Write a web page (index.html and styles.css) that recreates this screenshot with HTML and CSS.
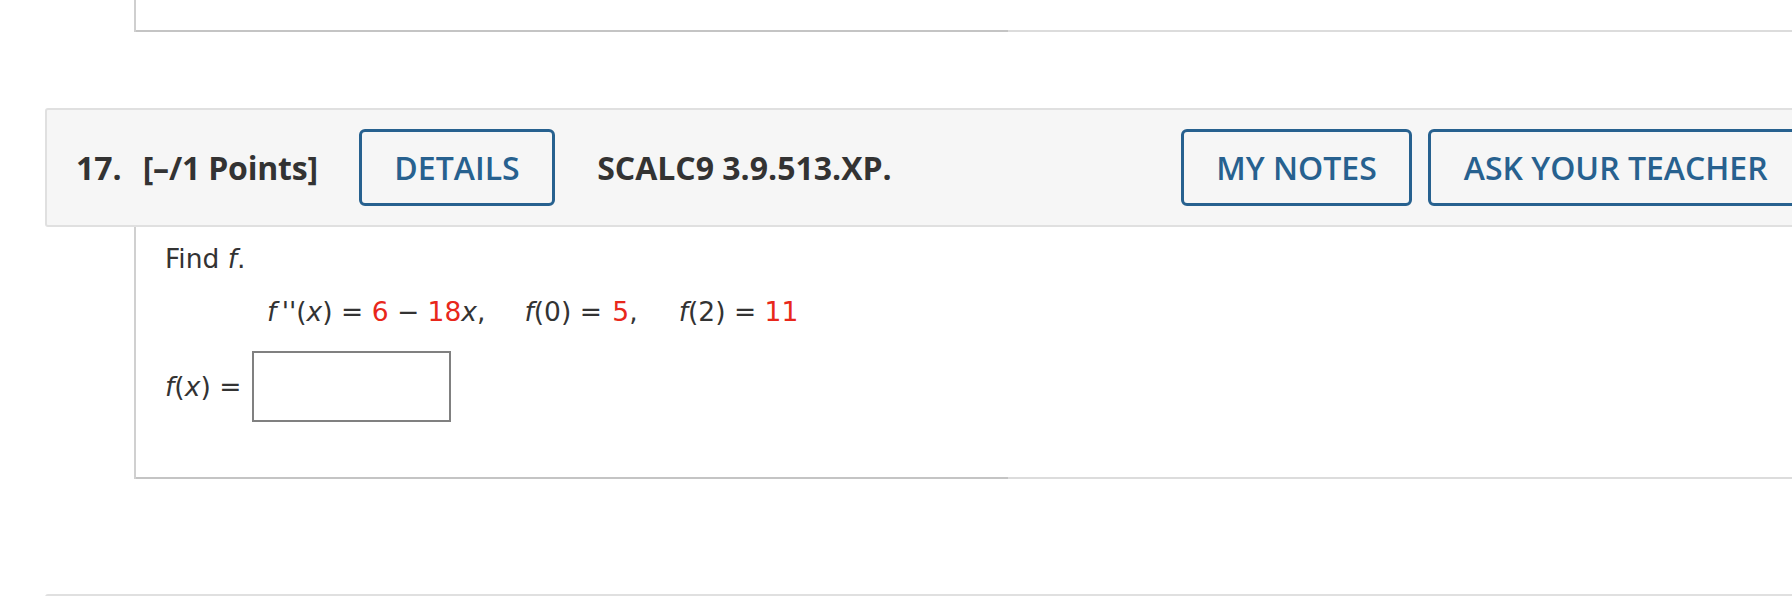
FILE: index.html
```html
<!DOCTYPE html>
<html>
<head>
<meta charset="utf-8">
<link rel="stylesheet" href="styles.css">
</head>
<body>
<div class="page">
  <div class="prev-box"></div>

  <div class="q-header">
    <span class="q-num">17.</span>
    <span class="q-points">[–/1 Points]</span>
    <button class="q-btn btn-details">DETAILS</button>
    <span class="q-code">SCALC9 3.9.513.XP.</span>
    <button class="q-btn btn-notes">MY NOTES</button>
    <button class="q-btn btn-ask">ASK YOUR TEACHER</button>
  </div>

  <div class="q-body">
    <p class="find">Find <i>f</i>.</p>
    <p class="math"><i>f</i>&thinsp;''(<i>x</i>) = <span class="red">6</span> − <span class="red">18</span><i>x</i>,<span class="sep"></span><i>f</i>(0) = <span class="red wide">5</span>,<span class="sep sep2"></span><i>f</i>(2) = <span class="red">11</span></p>
    <div class="answer-row">
      <span class="answer-label"><i>f</i>(<i>x</i>) =</span>
      <span class="answer-box"></span>
    </div>
  </div>

  <div class="q-header next"></div>
</div>
</body>
</html>
```

FILE: styles.css
```css
html, body {
  margin: 0;
  padding: 0;
  background: #ffffff;
  overflow: hidden;
}

.page {
  width: 1792px;
  height: 596px;
  overflow: hidden;
}

.prev-box {
  margin-left: 134px;
  margin-right: -80px;
  height: 32px;
  border-left: 2px solid #cfcfcf;
  box-sizing: border-box;
  background: linear-gradient(to right, #c4c4c4 872px, #dcdcdc 872px) left bottom / 100% 2px no-repeat;
}

.q-header {
  margin-top: 76px;
  margin-left: 45px;
  margin-right: -120px;
  background: #f6f6f6;
  border: 2px solid #e0e0e0;
  border-radius: 3px;
  padding: 19px 0 19px 29px;
  display: flex;
  align-items: center;
  font-family: "Open Sans", "Liberation Sans", sans-serif;
  color: #333333;
}

.q-num {
  font-weight: 700;
  font-size: 32px;
}

.q-points {
  font-weight: 700;
  font-size: 32px;
  margin-left: 21px;
  letter-spacing: -0.2px;
}

.q-code {
  font-weight: 700;
  font-size: 32px;
  margin-left: 42px;
}

.q-btn {
  font-family: "Open Sans", "Liberation Sans", sans-serif;
  font-weight: 600;
  font-size: 32px;
  color: #27618f;
  background: transparent;
  border: 3px solid #27618f;
  border-radius: 6px;
  height: 77px;
  padding: 0 32.5px;
  line-height: 71px;
  margin: 0;
  white-space: nowrap;
  flex-shrink: 0;
}

.btn-details {
  margin-left: 41px;
}

.btn-notes {
  margin-left: 289px;
}

.btn-ask {
  margin-left: 16px;
}

.q-body {
  margin-left: 134px;
  margin-right: -80px;
  height: 252px;
  box-sizing: border-box;
  border-left: 2px solid #d0d0d0;
  background: linear-gradient(to right, #c4c4c4 872px, #dcdcdc 872px) left bottom / 100% 2px no-repeat;
  padding: 12px 0 0 29px;
  font-family: Verdana, "DejaVu Sans", sans-serif;
  font-size: 26.5px;
  color: #333333;
}

.q-body p {
  margin: 0;
  line-height: 39px;
}

.math {
  margin-top: 14px !important;
  padding-left: 102px;
}

.red {
  color: #e8271b;
}

.wide {
  margin-left: 2px;
}

.sep {
  display: inline-block;
  width: 39px;
}

.sep2 {
  width: 41px;
}

.answer-row {
  margin-top: 20px;
  display: flex;
  align-items: center;
}

.answer-label {
  line-height: 39px;
}

.answer-box {
  display: inline-block;
  margin-left: 11px;
  width: 199px;
  height: 71px;
  box-sizing: border-box;
  border: 2px solid #808080;
  background: #ffffff;
}

.q-header.next {
  margin-top: 115px;
  height: 60px;
  padding: 0;
}
```
